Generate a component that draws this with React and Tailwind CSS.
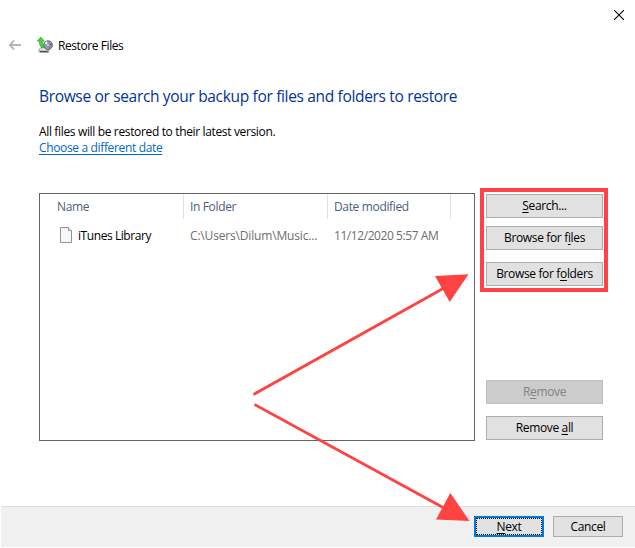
import clsx from 'clsx';

const files = [
  { name: 'iTunes Library', folder: 'C:\\Users\\Dilum\\Music...', modified: '11/12/2020 5:57 AM' },
];

function DialogButton({ children, className, disabled }) {
  return (
    <button
      type="button"
      disabled={disabled}
      className={clsx(
        'flex h-6 w-[117px] shrink-0 items-center justify-center border whitespace-nowrap',
        disabled ? 'border-[#bfbfbf] bg-[#cccccc] text-[#838383]' : 'border-[#adadad] bg-[#e1e1e1] text-black',
        className
      )}
    >
      {children}
    </button>
  );
}

// Underlined access key
function Key({ children }) {
  return <span className="underline decoration-1 underline-offset-2">{children}</span>;
}

function RestoreIcon() {
  return (
    <svg width="16" height="16" viewBox="0 0 16 16">
      <path d="M2 12.500 4 10.500h6l2 2v2l-1 .8H3l-1-.8z" fill="#e4e4e4" stroke="#777" strokeWidth=".8" />
      <path d="M3 14.300h8" stroke="#333" strokeWidth="1" />
      <circle cx="11" cy="8.200" r="4.400" fill="#8f9bb2" stroke="#5c5c66" strokeWidth=".9" />
      <path d="M11 8.200 7.500 6.200 10 4.100z" fill="#e9edf4" />
      <path d="M11 8.200 14.500 5.700l.6 3z" fill="#5577ad" />
      <path d="m11 8.200 3.500 2-2.500 2z" fill="#bd7767" />
      <circle cx="11" cy="8.200" r="1.300" fill="#f5f5f5" stroke="#777" strokeWidth=".6" />
      <path d="M3.700 0 .4 4.200h2.100c-.2 3 .5 5.400 3 7L7 9.500C5.600 8 5.300 6.500 5.400 4.200h2z" fill="#3fdc2b" stroke="#23961c" strokeWidth=".6" />
    </svg>
  );
}

function FileIcon() {
  return (
    <svg width="13" height="16" viewBox="0 0 13 16">
      <path d="M.5.5h8l3 3v12H.5z" fill="#f7f7f7" stroke="#929292" />
      <path d="M8.500.5v3h3" fill="#fff" stroke="#929292" />
    </svg>
  );
}

// Red arrows pointing at the browse buttons and at Next
function Arrows() {
  return (
    <svg className="pointer-events-none absolute top-0 left-0" width="635" height="548" viewBox="0 0 635 548">
      <g stroke="#ff4343" strokeWidth="2.800">
        <path d="M253.500 394.500 444 288" />
        <path d="M254.500 404.500 444 508" />
      </g>
      <g fill="#ff4343">
        <path d="M468.500 274.300 435 276l14.700 26z" />
        <path d="M469.500 521 450.300 493 436 519.500z" />
      </g>
    </svg>
  );
}

export default function App() {
  return (
    <div className="relative flex h-[548px] w-[635px] flex-col overflow-hidden bg-white font-['Open_Sans','Noto_Sans',sans-serif] text-[12px] leading-4 tracking-[-0.35px] text-black">
      <div className="flex h-[30px] shrink-0 justify-end pt-[10px] pr-[11px]">
        <svg width="10" height="10" viewBox="0 0 10 10">
          <path d="m0 0 10 10M10 0 0 10" stroke="#000" strokeWidth="1.100" />
        </svg>
      </div>

      <div className="flex h-8 shrink-0 items-center pl-[9px]">
        <svg className="-mt-0.5" width="12" height="10" viewBox="0 0 12 10">
          <path d="M12 5H1M5 .7.800 5 5 9.300" fill="none" stroke="#b5b5b5" strokeWidth="1.900" />
        </svg>
        <div className="-mt-0.5 ml-4">
          <RestoreIcon />
        </div>
        <span className="ml-[5px] tracking-[-0.42px]">Restore Files</span>
      </div>

      <div className="flex h-[131px] shrink-0 flex-col items-start pt-[23px] pl-[39px]">
        <h1 className="text-[15.5px] leading-[22px] tracking-[-0.33px] whitespace-nowrap text-[#003399]">
          Browse or search your backup for files and folders to restore
        </h1>
        <p className="mt-[17px] leading-4">All files will be restored to their latest version.</p>
        <a className="leading-[15px] text-[#0066cc] underline underline-offset-2">Choose a different date</a>
      </div>

      <div className="flex h-[248px] shrink-0 pl-[39px]">
        <div className="w-[436px] border border-[#646464]">
          <div className="grid h-[25px] grid-cols-[144px_144px_123px] text-[#4c607a]">
            <div className="border-r border-[#e0e0e0] pt-[5px] pl-[17px]">Name</div>
            <div className="border-r border-[#e0e0e0] pt-[5px] pl-[6px]">In Folder</div>
            <div className="border-r border-[#e0e0e0] pt-[5px] pl-[6px]">Date modified</div>
          </div>
          {files.map((file) => (
            <div key={file.name} className="mt-2 grid h-[17px] grid-cols-[144px_144px_123px] items-end tracking-[-0.43px] whitespace-nowrap text-[#6d6d6d]">
              <div className="flex gap-[5px] pl-5 text-black">
                <div className="-mt-px">
                  <FileIcon />
                </div>
                {file.name}
              </div>
              <div className="pl-[6px] tracking-[-0.17px]">{file.folder}</div>
              <div className="pl-[6px]">{file.modified}</div>
            </div>
          ))}
        </div>

        <div className="-mt-[5px] ml-[5px] flex w-32 flex-col">
          <div className="flex h-[104px] flex-col border-4 border-[#ff4343] pt-[2px] pl-[2px]">
            <DialogButton><span><Key>S</Key>earch...</span></DialogButton>
            <DialogButton className="mt-2"><span>Browse for f<Key>i</Key>les</span></DialogButton>
            <DialogButton className="mt-3"><span>Browse for f<Key>o</Key>lders</span></DialogButton>
          </div>
          <div className="mt-[88px] flex flex-col gap-3 pl-[6px]">
            <DialogButton disabled><span>R<Key>e</Key>move</span></DialogButton>
            <DialogButton><span>Remove <Key>a</Key>ll</span></DialogButton>
          </div>
        </div>
      </div>

      <div className="mt-[65px] ml-px flex h-[41px] shrink-0 justify-end gap-[9px] border-t border-[#dfdfdf] bg-[#f0f0f0] pt-[9px] pr-3">
        <button type="button" className="h-[21px] w-[70px] border-2 border-[#0078d7] bg-[#e1e1e1]">
          <span className="flex h-full items-center justify-center border border-dotted border-black">
            <span><Key>N</Key>ext</span>
          </span>
        </button>
        <button type="button" className="h-[21px] w-[70px] border border-[#adadad] bg-[#e1e1e1]">Cancel</button>
      </div>

      <Arrows />
    </div>
  );
}
